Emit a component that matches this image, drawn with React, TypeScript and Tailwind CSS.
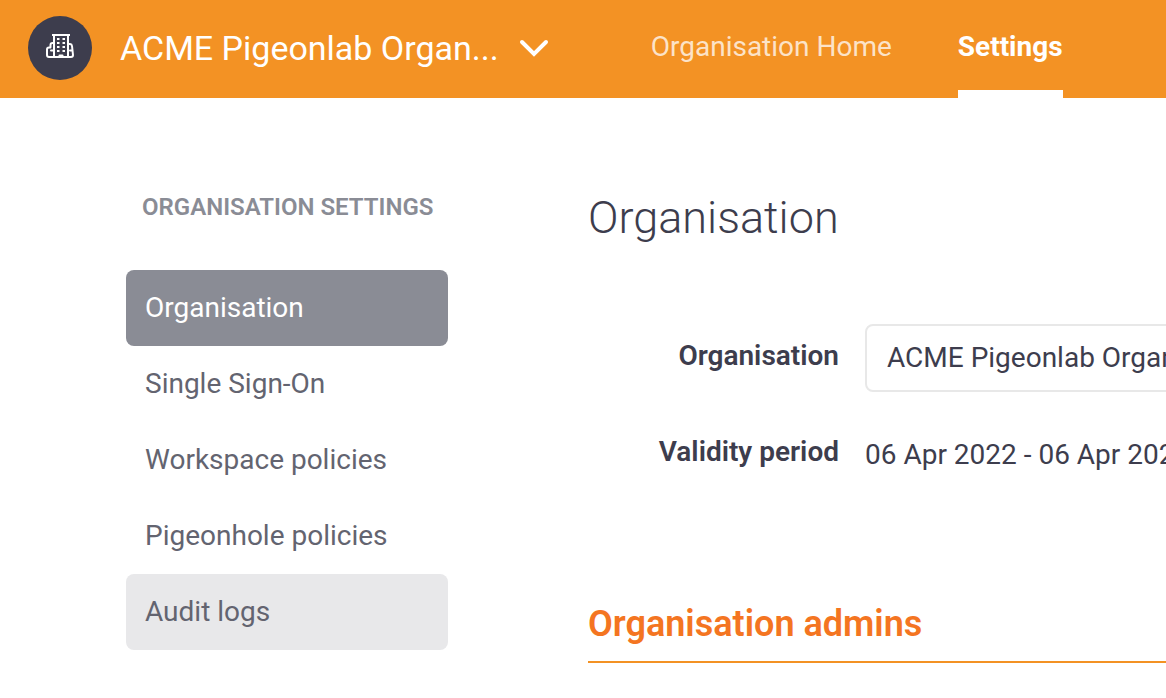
import clsx from "clsx";

const NAV_LINKS = [
  { label: "Organisation Home", active: false },
  { label: "Settings", active: true },
];

const SETTINGS_LINKS = [
  { label: "Organisation", state: "active" },
  { label: "Single Sign-On", state: "idle" },
  { label: "Workspace policies", state: "idle" },
  { label: "Pigeonhole policies", state: "idle" },
  { label: "Audit logs", state: "hover" },
];

function BuildingIcon() {
  return (
    <svg
      viewBox="0 0 28 26"
      className="h-[26px] w-7"
      fill="none"
      stroke="currentColor"
      strokeWidth={2}
      strokeLinecap="round"
      strokeLinejoin="round"
      aria-hidden
    >
      <path d="M7 2H23" strokeLinecap="square" />
      <path d="M8 2V24M22 2V24" />
      <path d="M8 10H6.5a2 2 0 0 0-2 2V14M4.5 14.5H3a2 2 0 0 0-2 2V22a2 2 0 0 0 2 2H25a2 2 0 0 0 2-2L26 13a2.2 2.2 0 0 0-2-2H22" />
      <path d="M5 17.5H7M24 17.5H25.5" />
      <path d="M13.5 24V22.5H16.5V24" />
      {/* windows */}
      <path
        d="M11 6H13.5M16.5 6H19M11 10H13.5M16.5 10H19M11 14H13.5M16.5 14H19M11 18H13.5M16.5 18H19"
        strokeLinecap="butt"
      />
    </svg>
  );
}

function ChevronIcon() {
  return (
    <svg
      viewBox="0 0 30 18"
      className="h-[18px] w-[30px]"
      fill="none"
      stroke="currentColor"
      strokeWidth={4}
      strokeLinecap="round"
      aria-hidden
    >
      <path d="M3 3L15 15L27 3" strokeLinejoin="miter" />
    </svg>
  );
}

function TopBar() {
  return (
    <header className="flex h-[98px] bg-[#f39224] pl-7 text-white">
      <button type="button" className="flex shrink-0 items-center pb-0.5">
        <span className="flex size-16 items-center justify-center rounded-full bg-[#3d3d4d] pb-1">
          <BuildingIcon />
        </span>
        <span className="ml-7 text-[34px] leading-10">ACME Pigeonlab Organ...</span>
        <span className="ml-5">
          <ChevronIcon />
        </span>
      </button>
      <nav className="ml-[102px] flex shrink-0 gap-[66px] text-[28px]">
        {NAV_LINKS.map((link) => (
          <a
            key={link.label}
            href="#"
            aria-current={link.active ? "page" : undefined}
            className={clsx(
              "flex items-center border-b-8 pt-1",
              link.active ? "border-white font-bold" : "border-transparent text-white/75"
            )}
          >
            {link.label}
          </a>
        ))}
      </nav>
    </header>
  );
}

function Sidebar() {
  return (
    <aside className="w-[322px] shrink-0">
      <h2 className="px-4 text-2xl leading-[34px] font-semibold whitespace-nowrap text-[#8a8c95] uppercase">
        Organisation settings
      </h2>
      <nav className="mt-[46px] flex flex-col">
        {SETTINGS_LINKS.map((link) => (
          <a
            key={link.label}
            href="#"
            className={clsx(
              "flex h-[76px] items-center rounded-lg px-[19px] text-[28px]",
              link.state === "active" && "bg-[#8a8c95] text-white",
              link.state === "idle" && "text-[#636470]",
              link.state === "hover" && "bg-[#e8e8ea] text-[#636470]"
            )}
          >
            {link.label}
          </a>
        ))}
      </nav>
    </aside>
  );
}

function OrganisationPanel() {
  return (
    <main className="min-w-[720px] flex-1">
      <h1 className="text-[45px] leading-[56px] font-light">Organisation</h1>

      <div className="mt-[78px] flex gap-[26px] text-[28px] leading-8">
        <label htmlFor="org-name" className="w-[251px] shrink-0 pt-4 text-right font-semibold">
          Organisation
        </label>
        <input
          id="org-name"
          type="text"
          defaultValue="ACME Pigeonlab Organisation"
          className="h-[68px] min-w-0 flex-1 rounded-lg border-2 border-[#e8e8e8] px-5 pb-0.5 outline-none"
        />
      </div>
      <div className="mt-11 flex gap-[26px] text-[28px] leading-8">
        <span className="w-[251px] shrink-0 text-right font-semibold">Validity period</span>
        <span className="pt-[3px] whitespace-nowrap">06 Apr 2022 - 06 Apr 2023</span>
      </div>

      <h2 className="mt-[132px] border-b-2 border-[#f39224] pb-4 text-4xl leading-[42px] font-semibold text-[#f47521]">
        Organisation admins
      </h2>
    </main>
  );
}

export default function App() {
  return (
    <div className="min-h-screen overflow-x-hidden bg-white font-['Roboto',sans-serif] text-[#3d3d4d]">
      <TopBar />
      <div className="flex gap-[140px] pt-[92px] pb-8 pl-[126px]">
        <Sidebar />
        <OrganisationPanel />
      </div>
    </div>
  );
}
